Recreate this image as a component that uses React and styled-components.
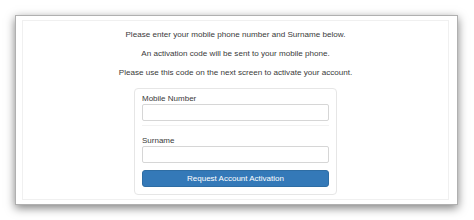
import React from "react";
import styled, { createGlobalStyle } from "styled-components";

const Global = createGlobalStyle`
  html, body { margin: 0; padding: 0; background: #ffffff; }
  body { font-family: "Liberation Sans", Arial, sans-serif; }
`;

const Page = styled.div`
  width: 474px;
  height: 220px;
  padding: 15px 16px 0 15px;
  box-sizing: border-box;
`;

const Frame = styled.div`
  width: 443px;
  height: 190px;
  box-sizing: border-box;
  border: 1px solid #b0b0b0;
  background: #ffffff;
  box-shadow: 0 3px 9px rgba(0, 0, 0, 0.5);
  padding: 4px 8px 4px 6px;
`;

const Panel = styled.div`
  height: 100%;
  box-sizing: border-box;
  border: 1px solid #f0f0f0;
  display: flex;
  flex-direction: column;
  align-items: center;
  padding-top: 8px;
  color: #3a3a3a;
  font-size: 8.1px;
`;

const Lines = styled.div`
  display: flex;
  flex-direction: column;
  align-items: center;
  gap: 8px;
`;

const Line = styled.p`
  margin: 0;
  line-height: 11px;
  white-space: nowrap;
`;

const FormBox = styled.div`
  margin-top: 10px;
  width: 203px;
  height: 107px;
  box-sizing: border-box;
  border: 1px solid #e6e6e6;
  border-radius: 4px;
  padding: 5px 7px 5px 7px;
  display: flex;
  flex-direction: column;
`;

const Group = styled.div`
  display: flex;
  flex-direction: column;
  padding-bottom: ${(p) => p.$pb || 0}px;
  border-bottom: ${(p) => (p.$sep ? "1px solid #f2f2f2" : "none")};
  margin-bottom: ${(p) => p.$mb || 0}px;
`;

const Label = styled.label`
  line-height: 10px;
  font-size: 8px;
  color: #3a3a3a;
`;

const Input = styled.div`
  height: 17px;
  box-sizing: border-box;
  border: 1px solid #d6d6d6;
  border-radius: 2px;
  background: #fff;
`;

const Button = styled.button`
  height: 17px;
  box-sizing: border-box;
  border: 1px solid #2e6da4;
  border-radius: 3px;
  background: #3479b8;
  color: #ffffff;
  font-family: "Liberation Sans", Arial, sans-serif;
  font-size: 8px;
  padding: 0;
  margin-top: 7px;
  width: 100%;
`;

export default function App() {
  return (
    <>
      <Global />
      <Page>
        <Frame>
          <Panel>
            <Lines>
              <Line>Please enter your mobile phone number and Surname below.</Line>
              <Line>An activation code will be sent to your mobile phone.</Line>
              <Line>Please use this code on the next screen to activate your account.</Line>
            </Lines>
            <FormBox>
              <Group $sep $pb={4} $mb={10}>
                <Label>Mobile Number</Label>
                <Input />
              </Group>
              <Group>
                <Label>Surname</Label>
                <Input />
              </Group>
              <Button>Request Account Activation</Button>
            </FormBox>
          </Panel>
        </Frame>
      </Page>
    </>
  );
}
